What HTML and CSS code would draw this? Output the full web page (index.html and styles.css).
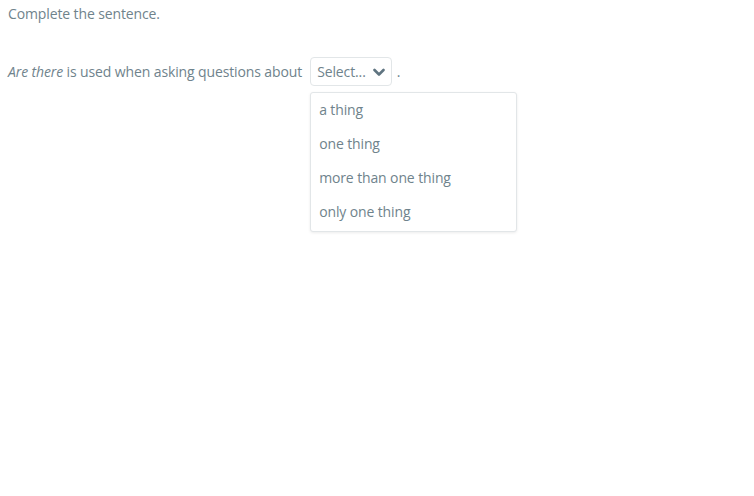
FILE: index.html
```html
<!DOCTYPE html>
<html>
<head>
<meta charset="utf-8">
<link rel="stylesheet" href="styles.css">
</head>
<body>
<div class="page">
<p class="instr">Complete the sentence.</p>
<div class="sentence">
  <span class="lead"><em>Are there</em> is used when asking questions about</span>
  <div class="select-wrap">
    <div class="select">Select...
      <svg class="chev" width="12" height="9" viewBox="0 0 12 9"><path d="M1.5 2 L6 6.5 L10.5 2" fill="none" stroke="#5f7480" stroke-width="2.6" stroke-linecap="round" stroke-linejoin="round"/></svg>
    </div>
    <div class="choices">
      <div class="choice">a thing</div>
      <div class="choice">one thing</div>
      <div class="choice">more than one thing</div>
      <div class="choice">only one thing</div>
    </div>
  </div>
  <span class="dot">.</span>
</div>
</div>
</body>
</html>
```
FILE: styles.css
```css
html, body {
  margin: 0;
  padding: 0;
  min-height: 100%;
  height: 100%;
  background: #fff;
}
.page {
  box-sizing: border-box;
  min-height: 496px;
  padding: 0 8px;
  font-family: "Open Sans", "Noto Sans", sans-serif;
  font-size: 14px;
  letter-spacing: -0.12px;
  color: #6f838c;
}
.instr {
  margin: 0;
  padding-top: 4px;
  line-height: 20px;
}
.sentence {
  margin-top: 33px;
  display: flex;
  align-items: center;
  gap: 8px;
  line-height: 20px;
}
.sentence em {
  font-style: italic;
}
.select-wrap {
  position: relative;
}
.select {
  display: flex;
  align-items: center;
  gap: 7px;
  height: 29px;
  padding: 0 6px 0 6px;
  border: 1px solid #e2e6e8;
  border-radius: 4px;
  box-sizing: border-box;
}
.chev {
  margin-top: 2px;
}
.dot {
  margin-left: -3px;
}
.choices {
  position: absolute;
  z-index: 10;
  left: 0;
  top: 35px;
  width: 207px;
  padding: 0 0 2px;
  background: #fff;
  border: 1px solid #e2e6e8;
  border-radius: 3px;
  box-shadow: 0 1px 3px rgba(0,0,0,0.08);
  box-sizing: border-box;
}
.choice {
  padding: 0 8px;
  line-height: 34px;
  height: 34px;
  white-space: nowrap;
}
```
